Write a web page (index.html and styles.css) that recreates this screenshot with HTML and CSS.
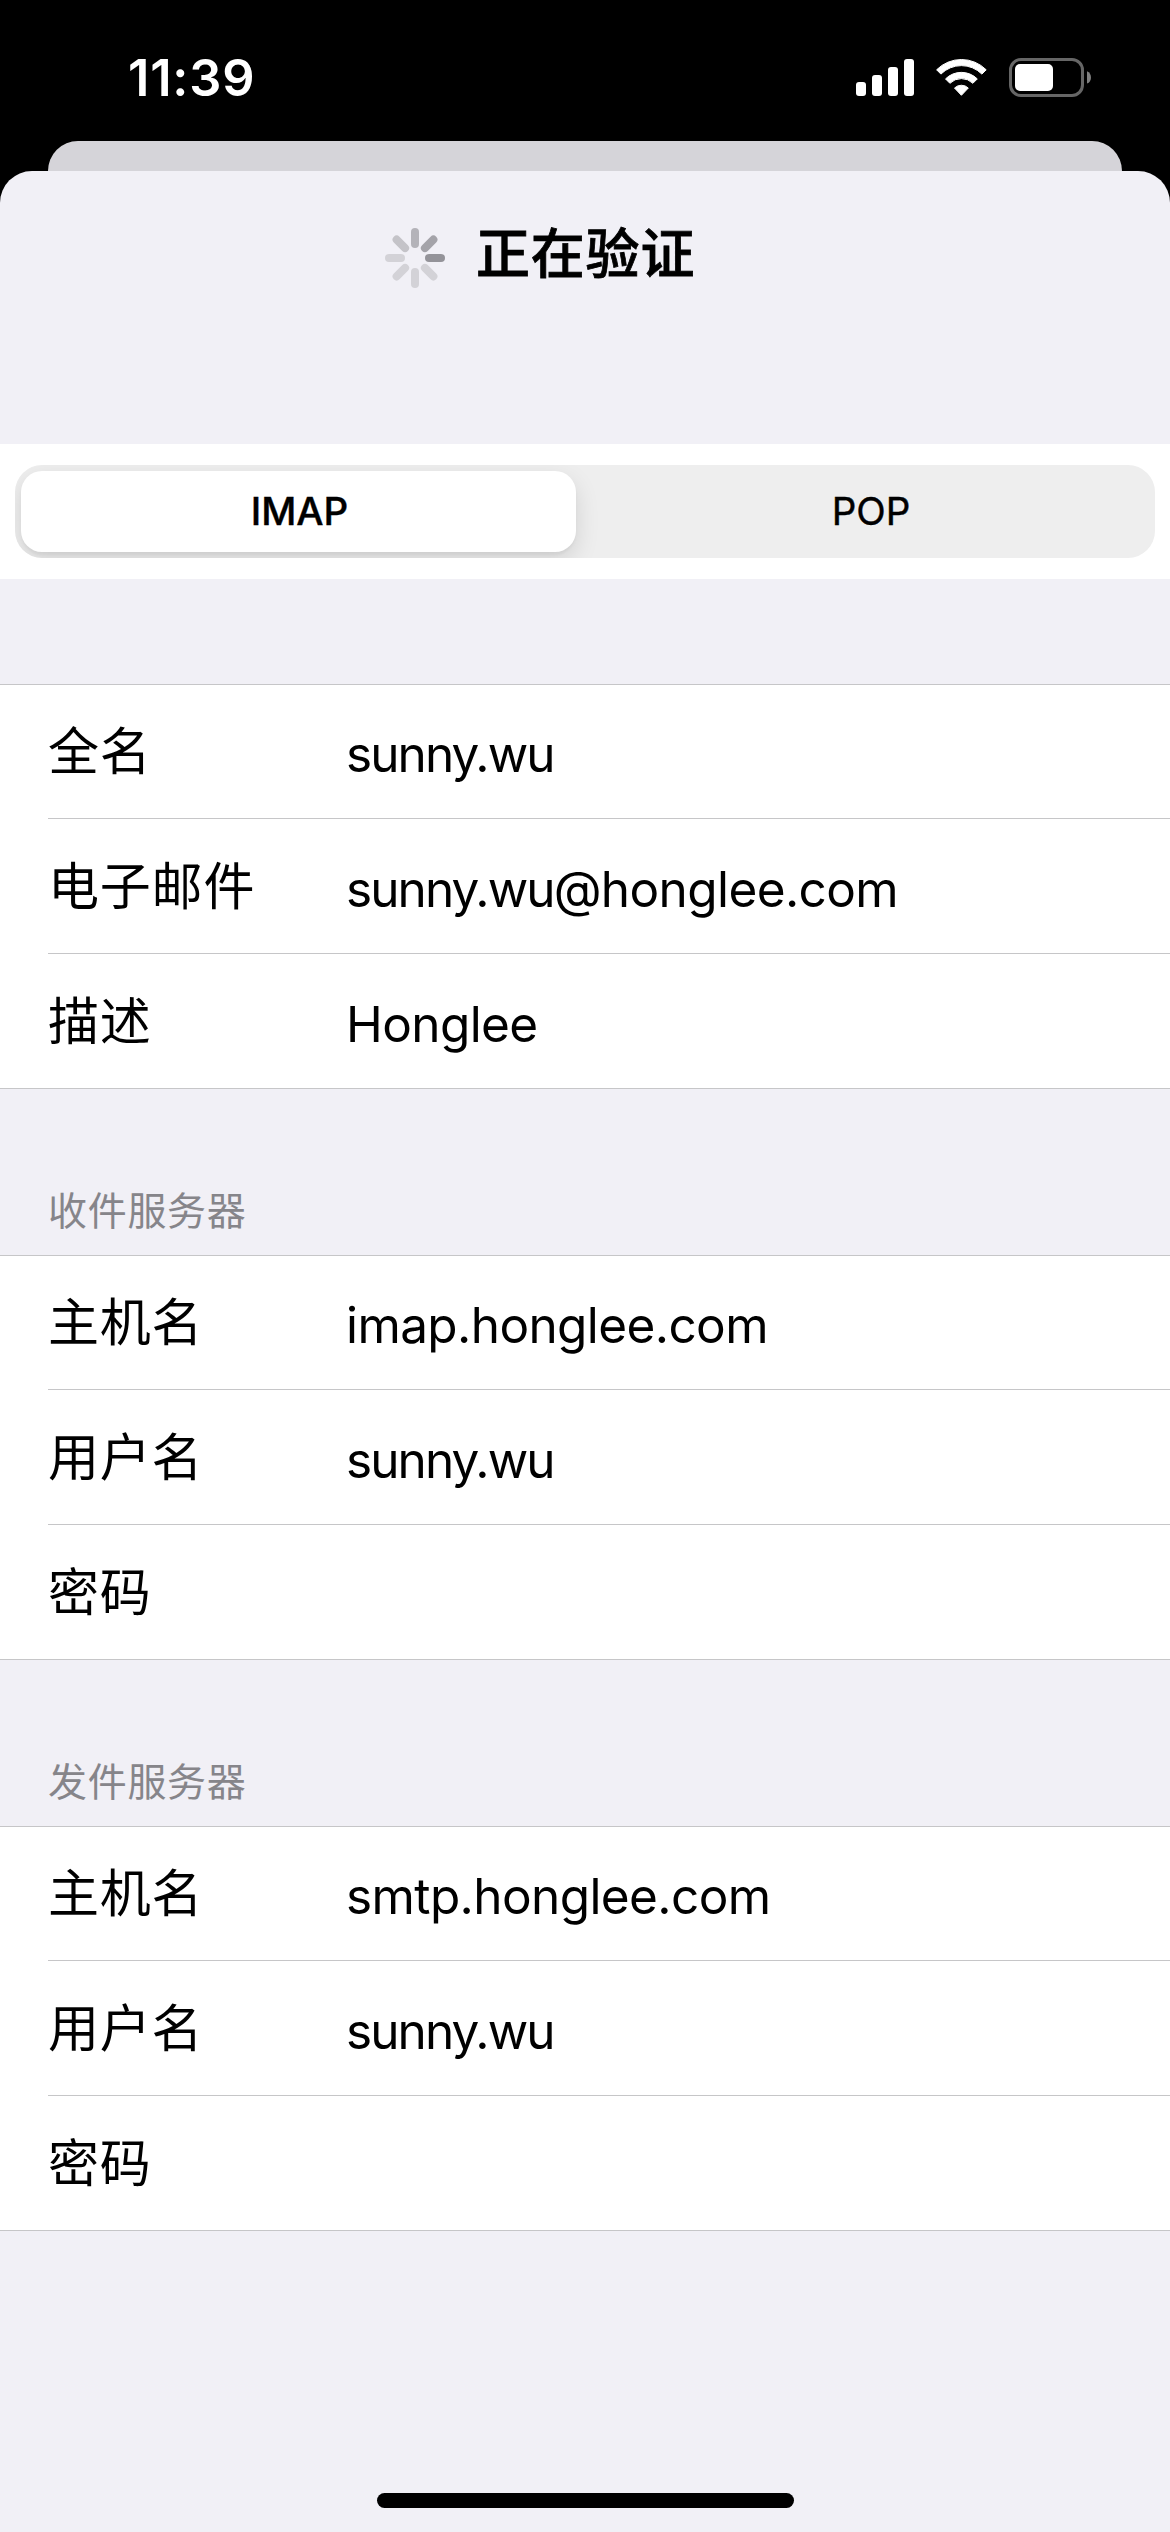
FILE: index.html
```
<!DOCTYPE html>
<html lang="zh-CN">
<head>
    <meta charset="UTF-8">
    <meta name="viewport" content="width=device-width, initial-scale=1.0">
    <title>正在验证</title>
    <link rel="stylesheet" href="styles.css">
</head>
<body>
    <div class="status-bar">
        <span class="time">11:39</span>
        <div class="status-icons">
            <svg class="signal" width="58" height="37" viewBox="0 0 58 37" fill="#fff">
                <rect x="0" y="23" width="10" height="14" rx="3"/>
                <rect x="16" y="16" width="10" height="21" rx="3"/>
                <rect x="32" y="8" width="10" height="29" rx="3"/>
                <rect x="48" y="0" width="10" height="37" rx="3"/>
            </svg>
            <svg class="wifi" width="51" height="37" viewBox="0 0 51 37" fill="#fff" stroke="#fff" stroke-width="1" stroke-linejoin="round">
                <path d="M0.6 10.8 A35 35 0 0 1 50.2 10.8 L45.9 15.1 A29 29 0 0 0 4.9 15.1 Z"/>
                <path d="M9.5 19.9 A22.6 22.6 0 0 1 41.3 19.9 L36.9 24.3 A16.4 16.4 0 0 0 13.9 24.3 Z"/>
                <path d="M18.5 29 A10 10 0 0 1 32.3 29 L25.4 36.3 Z"/>
            </svg>
            <svg class="battery" width="82" height="39" viewBox="0 0 82 39">
                <rect x="1.5" y="1.5" width="72" height="36" rx="10.5" fill="none" stroke="#666" stroke-width="3"/>
                <rect x="6" y="6" width="38" height="27" rx="5" fill="#fff"/>
                <path d="M78 13.2 C83.3 15.3 83.3 23.5 78 25.6 Z" fill="#808080"/>
            </svg>
        </div>
    </div>

    <div class="back-sheet"></div>

    <div class="sheet">
        <div class="header">
            <svg class="spinner" width="60" height="60" viewBox="-30 -30 60 60" stroke-width="8" stroke-linecap="round">
                <line x1="14" y1="0" x2="26" y2="0" stroke="#949399"/>
                <line x1="14" y1="0" x2="26" y2="0" stroke="#a4a3a9" transform="rotate(-45)"/>
                <line x1="14" y1="0" x2="26" y2="0" stroke="#b4b3b9" transform="rotate(-90)"/>
                <line x1="14" y1="0" x2="26" y2="0" stroke="#c4c3c8" transform="rotate(-135)"/>
                <line x1="14" y1="0" x2="26" y2="0" stroke="#d3d2d7" transform="rotate(180)"/>
                <line x1="14" y1="0" x2="26" y2="0" stroke="#d3d2d7" transform="rotate(135)"/>
                <line x1="14" y1="0" x2="26" y2="0" stroke="#d3d2d7" transform="rotate(90)"/>
                <line x1="14" y1="0" x2="26" y2="0" stroke="#d3d2d7" transform="rotate(45)"/>
            </svg>
            <h1 class="title">正在验证</h1>
        </div>

        <div class="segment-bar">
            <div class="segments">
                <div class="segment active">IMAP</div>
                <div class="segment">POP</div>
            </div>
        </div>

        <div class="section-title"></div>
        <div class="group">
            <div class="row"><span class="label">全名</span><span class="value user">sunny.wu</span></div>
            <div class="row"><span class="label">电子邮件</span><span class="value"><span class="user">sunny.wu</span>@honglee.com</span></div>
            <div class="row"><span class="label">描述</span><span class="value">Honglee</span></div>
        </div>

        <div class="section-title tall">收件服务器</div>
        <div class="group">
            <div class="row"><span class="label">主机名</span><span class="value">imap.honglee.com</span></div>
            <div class="row"><span class="label">用户名</span><span class="value user">sunny.wu</span></div>
            <div class="row"><span class="label">密码</span></div>
        </div>

        <div class="section-title tall">发件服务器</div>
        <div class="group">
            <div class="row"><span class="label">主机名</span><span class="value">smtp.honglee.com</span></div>
            <div class="row"><span class="label">用户名</span><span class="value user">sunny.wu</span></div>
            <div class="row"><span class="label">密码</span></div>
        </div>

        <div class="home-indicator"></div>
    </div>
</body>
</html>
```
FILE: styles.css
```
* {
    box-sizing: border-box;
}
body {
    display: flex;
    flex-direction: column;
    width: 1170px;
    height: 2532px;
    margin: 0;
    background-color: #000;
    color: #000;
    font-family: Inter, "Noto Sans CJK SC", sans-serif;
    overflow: hidden;
}

/* Barra de estado */
.status-bar {
    display: flex;
    justify-content: space-between;
    height: 141px;
    padding: 48px 79px 0 128px;
    color: #fff;
}
.time {
    font-size: 50.5px;
    font-weight: 600;
    line-height: 60px;
    letter-spacing: 0.8px;
}
.status-icons {
    display: flex;
    align-items: flex-start;
    padding-top: 10px;
}
.signal {
    margin: 1px 22px 0 0;
}
.wifi {
    margin: 1px 22px 0 0;
}

/* Hojas */
.back-sheet {
    height: 30px;
    margin: 0 48px;
    background-color: #d5d4d9;
    border-radius: 30px 30px 0 0;
}
.sheet {
    display: flex;
    flex-direction: column;
    flex: 1;
    background-color: #f1f0f6;
    border-radius: 32px 32px 0 0;
}
.header {
    display: flex;
    height: 273px;
    padding: 57px 0 0 385px;
}
.title {
    margin: -13px 0 0 31px;
    font-size: 54px;
    font-weight: 500;
    line-height: 80px;
    letter-spacing: 0.8px;
    -webkit-text-stroke: 0.8px #000;
}

/* Selector IMAP / POP */
.segment-bar {
    height: 135px;
    padding: 21px 15px;
    background-color: #fff;
}
.segments {
    display: flex;
    height: 93px;
    padding: 6px;
    background-color: #eee;
    border-radius: 27px;
    overflow: hidden;
}
.segment {
    display: flex;
    flex: 1;
    align-items: center;
    justify-content: center;
    padding: 0 0 2px 17px;
    font-size: 38.5px;
    font-weight: 400;
    border-radius: 21px;
    -webkit-text-stroke: 0.4px #000;
}
.segment.active {
    flex: 0 0 555px;
    padding-left: 2px;
    background-color: #fff;
    font-weight: 500;
    box-shadow: 0 9px 24px rgba(0, 0, 0, 0.12), 0 3px 3px rgba(0, 0, 0, 0.04);
}

/* Lista */
.section-title {
    height: 105px;
    padding-left: 48px;
    color: #86858a;
    font-size: 39px;
    letter-spacing: 0.7px;
}
.section-title.tall {
    height: 166px;
    padding-top: 92px;
    line-height: 60px;
}
.group {
    height: 405px;
    padding-left: 48px;
    background-color: #fff;
    border-top: 1px solid #c6c6c8;
    border-bottom: 1px solid #c6c6c8;
}
.row {
    display: flex;
    height: 135px;
    border-bottom: 1px solid #c6c6c8;
}
.row:first-child {
    height: 134px;
}
.row:last-child {
    height: 134px;
    border-bottom: none;
}
.label {
    width: 298px;
    padding-top: 28px;
    font-size: 51px;
    line-height: 80px;
    letter-spacing: 0.8px;
}
.value {
    padding-top: 40px;
    font-size: 49.5px;
    line-height: 60px;
    letter-spacing: -0.6px;
}
.row:first-child .label {
    padding-top: 27px;
}
.row:first-child .value {
    padding-top: 39px;
}
.user {
    letter-spacing: -1.9px;
}

.home-indicator {
    width: 417px;
    height: 15px;
    margin: auto auto 24px 377px;
    background-color: #000;
    border-radius: 8px;
}
```
